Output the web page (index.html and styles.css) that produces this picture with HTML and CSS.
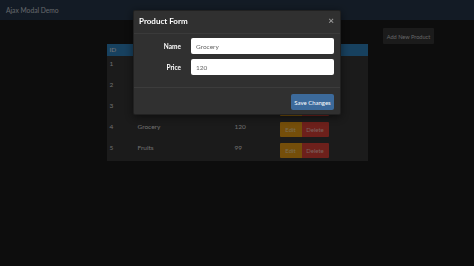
FILE: index.html
```html
<!DOCTYPE html>
<html lang="en">
<head>
<meta charset="utf-8">
<title>Ajax Modal Demo</title>
<link rel="stylesheet" href="styles.css">
</head>
<body>
<nav class="navbar"><span class="brand">Ajax Modal Demo</span></nav>
<main class="container">
  <div class="toolbar"><button class="btn btn-add">Add New Product</button></div>
  <table class="products">
    <thead>
      <tr><th class="c-id">ID</th><th class="c-name">Name</th><th class="c-price">Price</th><th class="c-act">Actions</th></tr>
    </thead>
    <tbody>
      <tr><td>1</td><td>Books</td><td>50</td><td><div class="acts"><button class="btn btn-edit">Edit</button><button class="btn btn-del">Delete</button></div></td></tr>
      <tr><td>2</td><td>Toys</td><td>30</td><td><div class="acts"><button class="btn btn-edit">Edit</button><button class="btn btn-del">Delete</button></div></td></tr>
      <tr><td>3</td><td>Shoes</td><td>80</td><td><div class="acts"><button class="btn btn-edit">Edit</button><button class="btn btn-del">Delete</button></div></td></tr>
      <tr><td>4</td><td>Grocery</td><td>120</td><td><div class="acts"><button class="btn btn-edit">Edit</button><button class="btn btn-del">Delete</button></div></td></tr>
      <tr><td>5</td><td>Fruits</td><td>99</td><td><div class="acts"><button class="btn btn-edit">Edit</button><button class="btn btn-del">Delete</button></div></td></tr>
    </tbody>
  </table>
</main>
<div class="backdrop"></div>
<div class="modal">
  <div class="modal-header">
    <span class="modal-title">Product Form</span>
    <span class="close">&times;</span>
  </div>
  <div class="modal-body">
    <div class="form-row"><label class="lbl">Name</label><input class="input" type="text" value="Grocery"></div>
    <div class="form-row"><label class="lbl">Price</label><input class="input" type="text" value="120"></div>
  </div>
  <div class="modal-footer">
    <button class="btn btn-save">Save Changes</button>
  </div>
</div>
</body>
</html>
```
FILE: styles.css
```css
* { box-sizing: border-box; }
html, body { margin: 0; padding: 0; }
body {
  background: #1a1a1a;
  font-family: Lato, "Open Sans", sans-serif;
  font-size: 7px;
  color: #eeeeee;
  height: 266px;
  overflow: hidden;
}
.navbar {
  height: 20px;
  background: #27374a;
  display: flex;
  align-items: center;
  padding-left: 6px;
}
.brand { color: #c8ced6; font-size: 6.7px; }
.container {
  padding: 8px 40px 0 40px;
}
.toolbar { display: flex; justify-content: flex-end; }
.btn {
  font-family: inherit;
  font-size: 6px;
  border: 0;
  margin: 0;
  cursor: pointer;
  color: #ffffff;
}
.btn-add {
  height: 16px;
  width: 51px;
  padding: 0;
  background: #363636;
  color: #c8c8c8;
  border-radius: 1px;
  font-size: 5.6px;
}
.products {
  width: 261px;
  margin: 0 auto;
  border-collapse: collapse;
  background: #363636;
  table-layout: fixed;
}
.products thead tr { background: #2f82be; }
.products th {
  text-align: left;
  font-weight: normal;
  padding: 1px 3px;
  height: 12px;
  line-height: 10px;
  color: #e8e8e8;
  font-size: 6.5px;
}
.c-id { width: 28px; }
.c-name { width: 97px; }
.c-price { width: 45px; }
.c-act { width: 91px; }
.products td {
  vertical-align: top;
  padding: 3px 3px;
  line-height: 9px;
  height: 21px;
  font-size: 6.5px;
  color: #dddddd;
}
.acts { display: flex; }
.btn-edit, .btn-del { height: 15px; padding: 0; font-size: 6px; }
.btn-edit { width: 22px; background: #e89c14; color: #f4dcb0; border-radius: 1px 0 0 1px; }
.btn-del { width: 27px; background: #da4036; color: #f4c4be; border-radius: 0 1px 1px 0; }
.backdrop {
  position: fixed;
  inset: 0;
  background: rgba(0, 0, 0, 0.5);
}
.modal {
  position: fixed;
  left: 133px;
  top: 10px;
  width: 208px;
  height: 105px;
  background: #303030;
  border: 1px solid rgba(0,0,0,0.3);
  border-radius: 2px;
  box-shadow: 0 2px 8px rgba(0,0,0,0.5);
  display: flex;
  flex-direction: column;
}
.modal-header {
  height: 23px;
  display: flex;
  align-items: center;
  justify-content: space-between;
  padding: 0 6px 2px 5px;
  border-bottom: 1px solid #3a3a3a;
}
.modal-title { font-weight: bold; font-size: 8px; color: #ffffff; }
.close { color: #9a9a9a; font-size: 10px; font-weight: bold; line-height: 1; margin-top: -3px; }
.modal-body {
  padding: 4px 6px 0 6px;
  height: 53px;
  display: flex;
  flex-direction: column;
  gap: 5px;
}
.form-row {
  display: grid;
  grid-template-columns: 41px 143px;
  column-gap: 10px;
  align-items: center;
}
.lbl { text-align: right; font-weight: bold; font-size: 6.5px; color: #ffffff; }
.input {
  height: 16px;
  width: 143px;
  background: #ffffff;
  border: 0;
  border-radius: 2px;
  padding: 0 5px;
  font-family: inherit;
  font-size: 6.5px;
  color: #666666;
}
.modal-footer {
  flex: 1;
  border-top: 1px solid #3c3c3c;
  display: flex;
  justify-content: flex-end;
  align-items: flex-start;
  padding: 6px 6px 0 0;
}
.btn-save {
  height: 16px;
  width: 43px;
  padding: 0;
  background: #3c6a9b;
  border-radius: 2px;
  font-size: 6px;
}
```
